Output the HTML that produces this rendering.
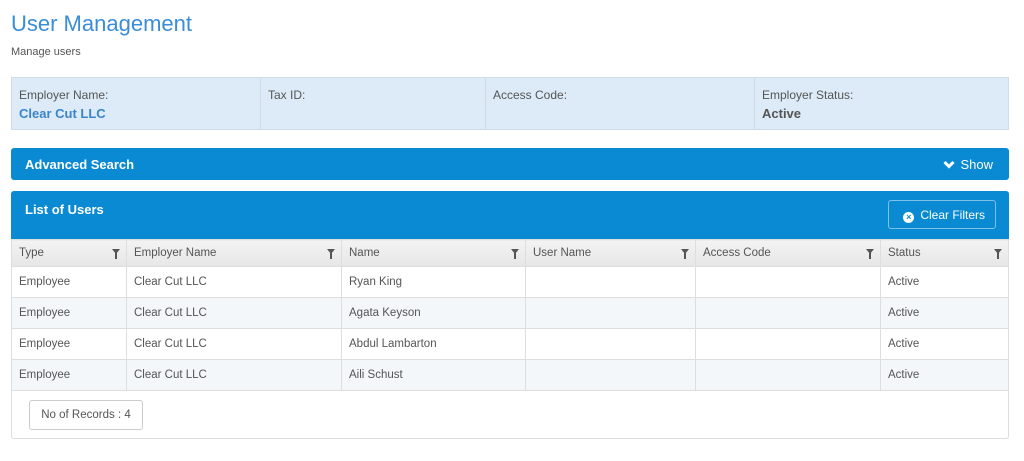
<!DOCTYPE html><html><head><style>
body{margin:0;background:#fff;font-family:"Liberation Sans",sans-serif;color:#555;width:1024px;height:461px;overflow:hidden;position:relative}
.a{position:absolute}
h1{position:absolute;left:11px;top:11px;margin:0;font-weight:normal;font-size:22px;color:#3a8dd6}
.info{left:11px;top:77px;width:996px;height:51px;background:#dcebf7;border:1px solid #d0dde8}
.info div{position:absolute;top:0;height:51px;border-right:1px solid #cfdce8;font-size:12px;padding:10px 7px;box-sizing:border-box}
.info b{display:block;font-size:13px;margin-top:4px}
.bar{background:#0a8ad2;color:#fff;border-radius:3px}
table{border-collapse:collapse;table-layout:fixed;position:absolute;left:11px;top:239px;width:998px;font-size:11.5px}
td,th{border:1px solid #dedede;padding:0 7px;text-align:left;height:30px}
th{height:26px;background:linear-gradient(#f3f3f3,#e6e6e6);font-weight:normal;color:#555;position:relative}
th span{position:absolute;right:6px;top:9px;width:0;height:0;border-left:4px solid transparent;border-right:4px solid transparent;border-top:5px solid #555}
th span:after{content:"";position:absolute;left:-1px;top:-1px;width:2px;height:6px;background:#555}
tr:nth-child(odd) td{background:#f3f7fa}
</style></head><body>
<h1>User Management</h1>
<div class="a" style="left:11px;top:46px;font-size:11px;color:#555">Manage users</div>
<div class="a info">
<div style="left:0;width:249px">Employer Name:<b style="color:#3a84cc">Clear Cut LLC</b></div>
<div style="left:249px;width:225px">Tax ID:</div>
<div style="left:474px;width:269px">Access Code:</div>
<div style="left:743px;width:253px;border:none">Employer Status:<b style="color:#555">Active</b></div>
</div>
<div class="a bar" style="left:11px;top:148px;width:998px;height:32px">
<div class="a" style="left:14px;top:9px;font-size:13px;font-weight:bold">Advanced Search</div>
<div class="a" style="right:16px;top:9px;font-size:13px"><svg width="12" height="9" viewBox="0 0 12 9" style="margin-right:5px;vertical-align:0"><path d="M1.5 2 L6 6.5 L10.5 2" stroke="#fff" stroke-width="3" fill="none"/></svg>Show</div></div>
<div class="a" style="left:11px;top:191px;width:996px;height:246px;border:1px solid #ddd;border-radius:3px"></div>
<div class="a bar" style="left:11px;top:191px;width:998px;height:48px;border-radius:3px 3px 0 0">
<div class="a" style="left:14px;top:11px;font-size:13px;font-weight:bold">List of Users</div>
<div class="a" style="right:13px;top:9px;width:108px;height:29px;border:1px solid #7fc0ea;border-radius:3px;font-size:12px;line-height:28px;text-align:right;box-sizing:border-box"><span style="display:inline-block;width:11px;height:11px;border-radius:50%;background:#fff;color:#0a8ad2;font-size:9px;line-height:11px;text-align:center;font-weight:bold;margin-right:6px;vertical-align:-1px">×</span>Clear Filters&nbsp;&nbsp;&nbsp;</div></div>
<table>
<colgroup><col style="width:115px"><col style="width:215px"><col style="width:184px"><col style="width:170px"><col style="width:185px"><col></colgroup>
<tr><th>Type<span></span></th><th>Employer Name<span></span></th><th>Name<span></span></th><th>User Name<span></span></th><th>Access Code<span></span></th><th>Status<span></span></th></tr>
<tr><td>Employee</td><td>Clear Cut LLC</td><td>Ryan King</td><td></td><td></td><td>Active</td></tr>
<tr><td>Employee</td><td>Clear Cut LLC</td><td>Agata Keyson</td><td></td><td></td><td>Active</td></tr>
<tr><td>Employee</td><td>Clear Cut LLC</td><td>Abdul Lambarton</td><td></td><td></td><td>Active</td></tr>
<tr><td>Employee</td><td>Clear Cut LLC</td><td>Aili Schust</td><td></td><td></td><td>Active</td></tr>
</table>
<div class="a" style="left:29px;top:400px;width:112px;height:28px;border:1px solid #ccc;border-radius:3px;font-size:11.5px;line-height:28px;text-align:center">No of Records : 4</div>
</body></html>
